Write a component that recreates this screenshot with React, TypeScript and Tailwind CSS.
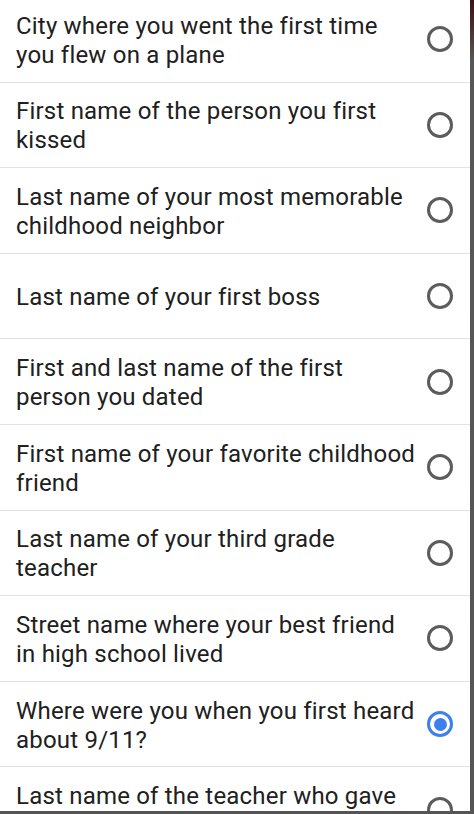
const QUESTIONS: { lines: string[]; selected?: boolean }[] = [
  { lines: ['City where you went the first time', 'you flew on a plane'] },
  { lines: ['First name of the person you first', 'kissed'] },
  { lines: ['Last name of your most memorable', 'childhood neighbor'] },
  { lines: ['Last name of your first boss'] },
  { lines: ['First and last name of the first', 'person you dated'] },
  { lines: ['First name of your favorite childhood', 'friend'] },
  { lines: ['Last name of your third grade', 'teacher'] },
  { lines: ['Street name where your best friend', 'in high school lived'] },
  { lines: ['Where were you when you first heard', 'about 9/11?'], selected: true },
  { lines: ['Last name of the teacher who gave', 'you your first failing grade'] },
];

function Radio({ selected }: { selected?: boolean }) {
  if (selected) {
    return (
      <div className="flex h-[26px] w-[26px] shrink-0 items-center justify-center rounded-full border-[3px] border-[#3d7ff0]">
        <div className="h-[13px] w-[13px] rounded-full bg-[#3d7ff0]" />
      </div>
    );
  }
  return <div className="h-[26px] w-[26px] shrink-0 rounded-full border-[3px] border-[#5c5c5c]" />;
}

export default function App() {
  return (
    <div className="h-[814px] w-[474px] overflow-hidden bg-[linear-gradient(to_bottom,#3c1212_0px,#4a3232_30px,#575757_60px,#555555_100%)]">
      <div
        className="h-[811px] w-[470px] overflow-hidden bg-white"
        style={{ fontFamily: 'Roboto, "Noto Sans", sans-serif' }}
      >
        <div className="-mt-[3px] flex flex-col">
          {QUESTIONS.map((q) => (
            <div
              key={q.lines[0]}
              className="flex h-[85.6px] shrink-0 items-center justify-between border-b-[1.5px] border-[#e2e2e2] pl-4 pr-[17px]"
            >
              <div className="mt-[3px] text-[24px] leading-[29px] tracking-[0.2px] text-[#202020]">
                {q.lines.map((line) => (
                  <div key={line} className="whitespace-nowrap">
                    {line}
                  </div>
                ))}
              </div>
              <Radio selected={q.selected} />
            </div>
          ))}
        </div>
      </div>
    </div>
  );
}
